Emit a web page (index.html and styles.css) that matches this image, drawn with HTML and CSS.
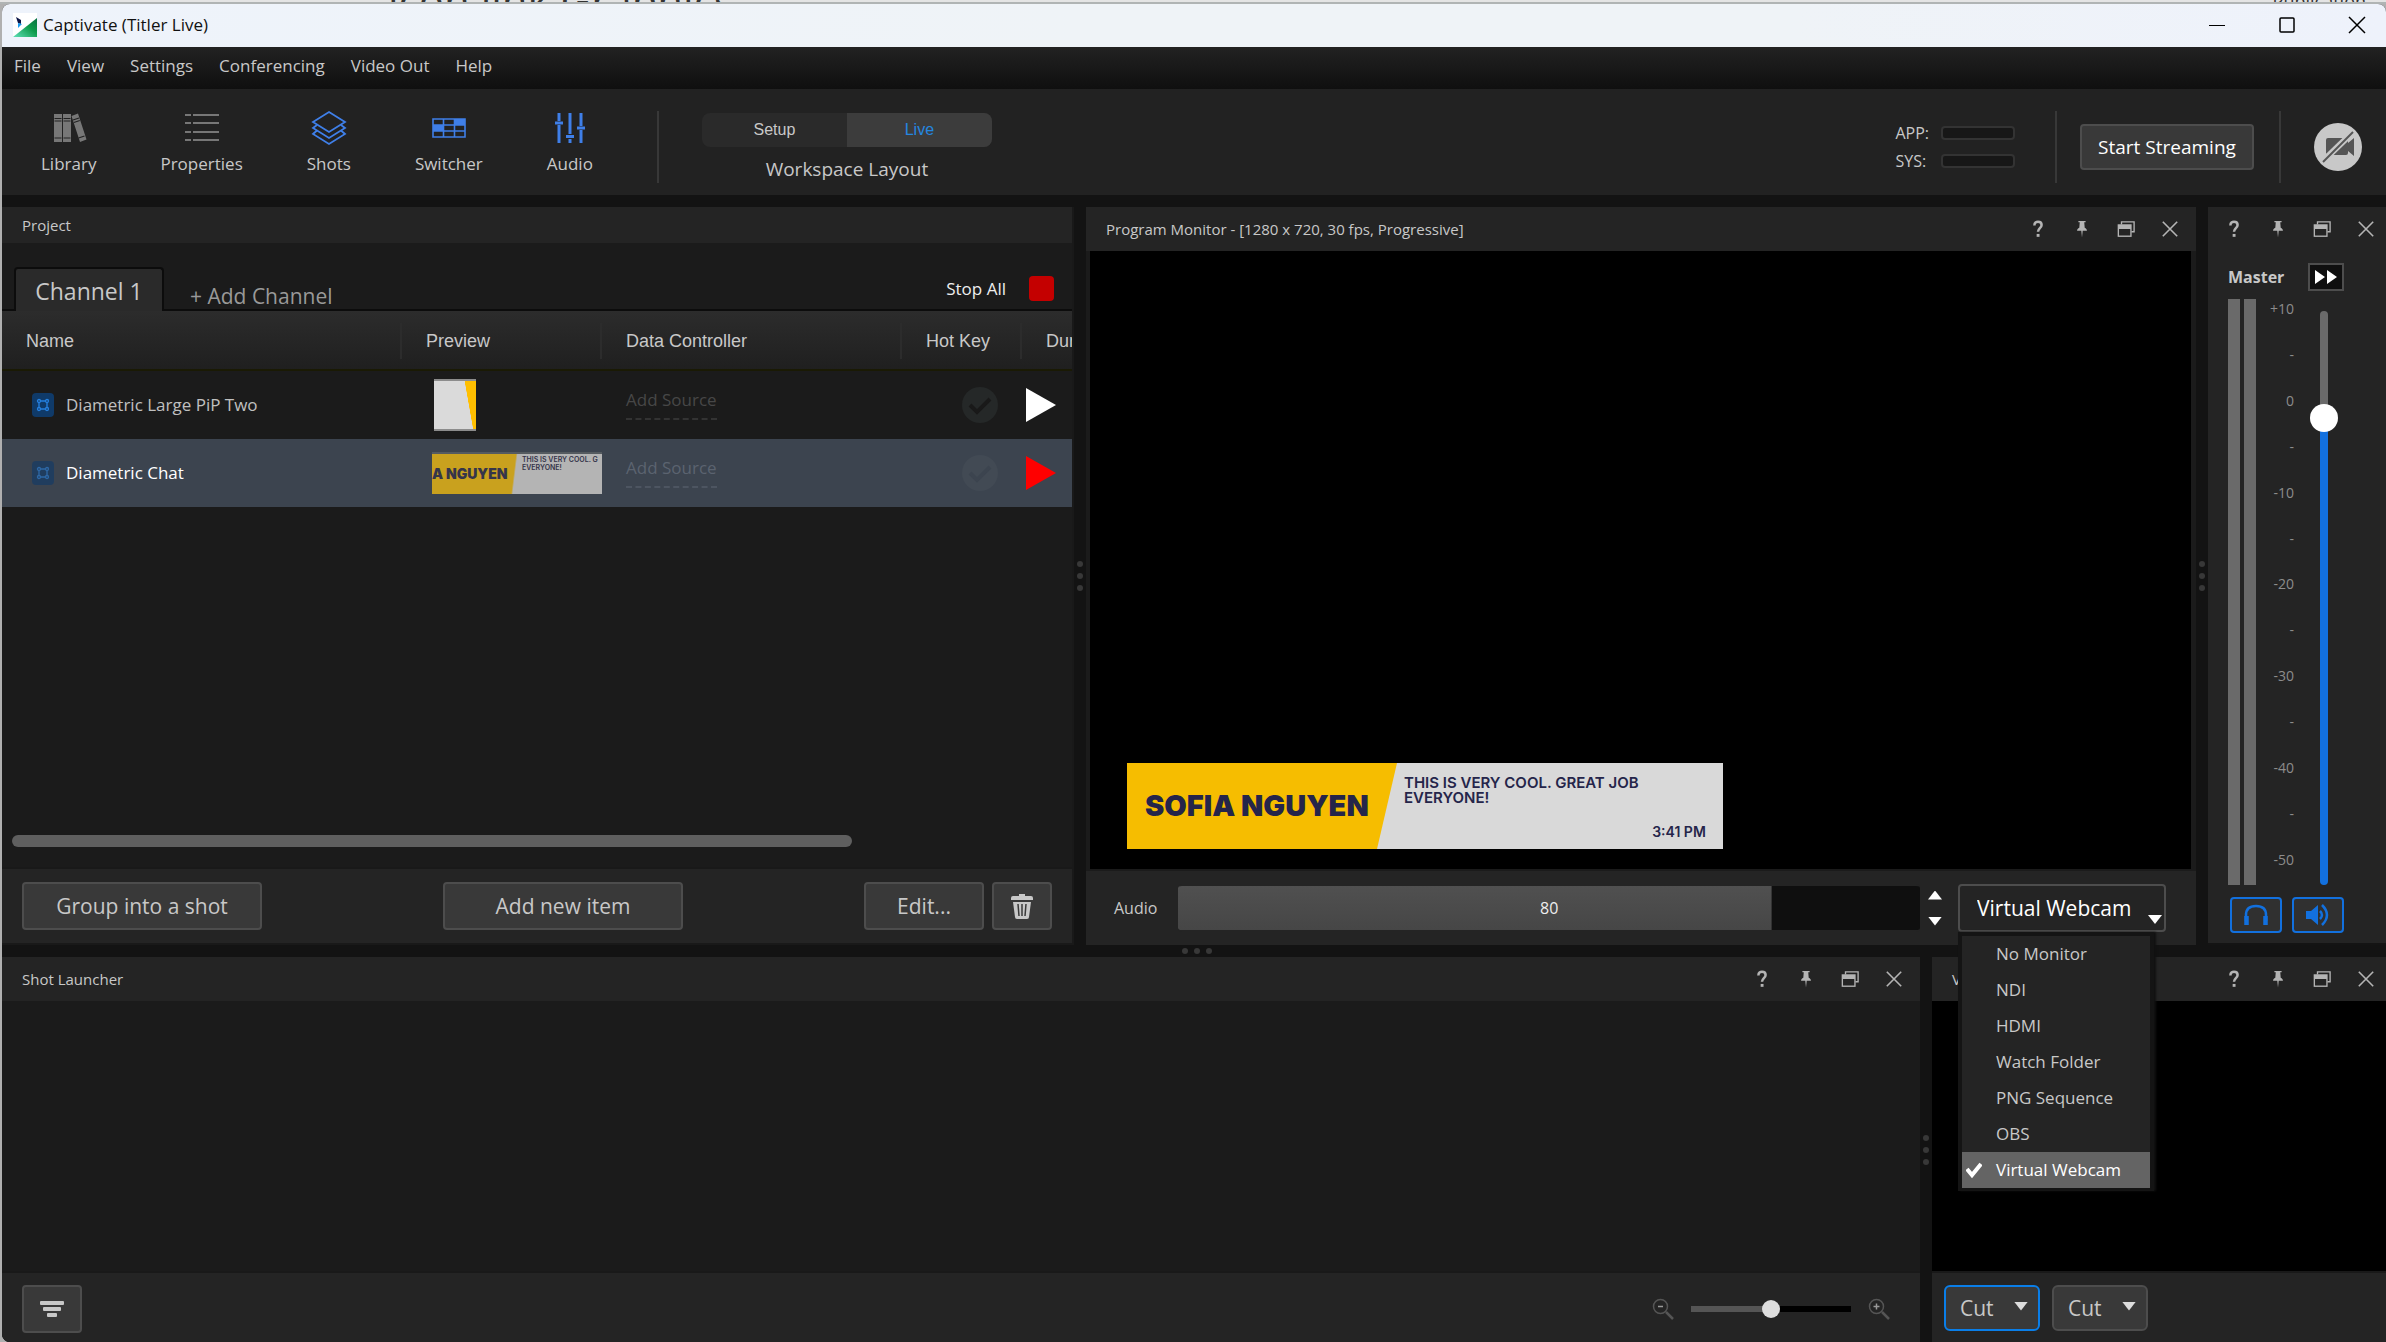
FILE: index.html
```html
<!DOCTYPE html>
<html lang="en">
<head>
  <meta charset="UTF-8">
  <meta name="viewport" content="width=device-width, initial-scale=1.0">
  <title>Captivate (Titler Live)</title>
  <link rel="stylesheet" href="styles.css">
</head>
<body>

<!-- Shared icons -->
<svg class="sprite" aria-hidden="true">
  <symbol id="i-help" viewBox="0 0 20 20"><path d="M6 6c0-3 2-4 4-4s4 1 4 3.500c0 3.500-4 3.500-4 7.500" fill="none" stroke="currentColor" stroke-width="2.800"/><rect x="8.500" y="15.500" width="3.200" height="3.200" fill="currentColor"/></symbol>
  <symbol id="i-pin" viewBox="0 0 20 20"><path d="M6 1h8v1.500h-1.500l.5 6c1.500.6 2.500 1.700 2.500 3.500h-4.700L10 19.500 9.200 12H4.500c0-1.800 1-2.900 2.500-3.500l.5-6H6z" fill="currentColor"/></symbol>
  <symbol id="i-restore" viewBox="0 0 20 20"><path d="M5 5V2h14v11h-3" fill="none" stroke="currentColor" stroke-width="1.500"/><rect x="1.500" y="5.500" width="14" height="12.500" fill="none" stroke="currentColor" stroke-width="1.500"/><rect x="1.500" y="5.500" width="14" height="4.500" fill="currentColor"/></symbol>
  <symbol id="i-close" viewBox="0 0 20 20"><path d="M2 2l16 16M18 2L2 18" fill="none" stroke="currentColor" stroke-width="1.800"/></symbol>
  <symbol id="i-item" viewBox="0 0 22 24"><rect width="22" height="24" rx="4" fill="#0f3a69"/><g fill="none" stroke="#2580e0" stroke-width="1.300"><path d="M8.500 8h5M8.500 16h5M7 9.500v5M15 9.500v5"/><circle cx="7" cy="8" r="1.500"/><circle cx="15" cy="8" r="1.500"/><circle cx="7" cy="16" r="1.500"/><circle cx="15" cy="16" r="1.500"/></g></symbol>
  <symbol id="i-check" viewBox="0 0 36 36"><circle cx="18" cy="18" r="18" fill="currentColor"/><path d="M8 18l7 7L28 12" fill="none" stroke="var(--tick)" stroke-width="4"/></symbol>
  <symbol id="i-play" viewBox="0 0 30 34"><path d="M0 0l30 17L0 34z" fill="currentColor"/></symbol>
</svg>

<div class="desktop"><span class="behind">icon link Graphics</span><span class="behind">Publication</span></div>

<div class="window">
  <header class="titlebar">
    <svg width="24" height="24" viewBox="0 0 24 24"><defs><linearGradient id="logo" x1="0" y1="1" x2="1" y2="0"><stop offset="0" stop-color="#5fe0b8"/><stop offset=".6" stop-color="#0c9a4a"/><stop offset="1" stop-color="#087042"/></linearGradient></defs><rect width="24" height="24" fill="#fff"/><path d="M24 5v19H0z" fill="url(#logo)"/><path d="M3 4l5 3v4l-3-1z" fill="#0b1445"/><path d="M5 10l4 1-4 4z" fill="#1b9cf0"/></svg>
    <h1>Captivate (Titler Live)</h1>
    <div class="window-buttons">
      <button aria-label="Minimize"><svg width="18" height="18" viewBox="0 0 18 18"><path d="M1 9.500h16" stroke="#000"/></svg></button>
      <button aria-label="Maximize"><svg width="18" height="18" viewBox="0 0 18 18"><rect x="2" y="2" width="14" height="14" rx="1" fill="none" stroke="#000" stroke-width="1.500"/></svg></button>
      <button aria-label="Close"><svg width="18" height="18" viewBox="0 0 18 18"><path d="M1 1l16 16M17 1L1 17" stroke="#000" stroke-width="1.500"/></svg></button>
    </div>
  </header>

  <nav class="menubar">
    <button>File</button>
    <button>View</button>
    <button>Settings</button>
    <button>Conferencing</button>
    <button>Video Out</button>
    <button>Help</button>
  </nav>

  <div class="toolbar">
    <div class="tools">
      <button class="tool">
        <svg width="36" height="36" viewBox="0 0 36 36" fill="#777"><path d="M3 4h8v28H3zM12 4h8v28h-8zM20.500 6l6.500-2.500 8.500 26-6.500 2.500z"/><path d="M3.500 8.500h7M3.500 11h7M3.500 28h7M12.500 8.500h7M12.500 11h7M12.500 28h7M22 10l6-2M22.800 12.500l6-2M27.500 28l6-2" stroke="#222" stroke-width="1.200"/></svg>
        Library
      </button>
      <button class="tool">
        <svg width="36" height="36" viewBox="0 0 36 36" fill="#777"><path d="M1 4h6v2H1zM9 4h26v2H9zM1 12h6v2H1zM9 12h26v2H9zM1 21h6v2H1zM9 21h26v2H9zM1 29h6v2H1zM9 29h26v2H9z"/></svg>
        Properties
      </button>
      <button class="tool">
        <svg width="36" height="36" viewBox="0 0 36 36" fill="none" stroke="#3f7fe8" stroke-width="1.800"><path d="M18 2l16 10-16 10L2 12z"/><path d="M6 15l-4 3 16 10 16-10-4-3M6 20.500l-4 3.500 16 10 16-10-4-3.500"/></svg>
        Shots
      </button>
      <button class="tool">
        <svg width="36" height="36" viewBox="0 0 36 36"><path d="M2 9h32v18H2zM2 15h32M2 21h32M12.500 9v18M23.500 9v18" fill="none" stroke="#3f7fe8" stroke-width="1.600"/><path d="M24 9h10v6H24zM2 15h10v6H2z" fill="#3f7fe8"/></svg>
        Switcher
      </button>
      <button class="tool">
        <svg width="36" height="36" viewBox="0 0 36 36" fill="#3f7fe8"><path d="M5.500 3h3v8h-3zM5.500 15h3v18h-3zM3 11.500h8v3H3zM16.500 3h3v21h-3zM16.500 29h3v4h-3zM14 25h8v3h-8zM27.500 3h3v13h-3zM27.500 20h3v13h-3zM25 16.500h8v3h-8z"/></svg>
        Audio
      </button>
    </div>
    <div class="divider"></div>
    <div class="workspace">
      <div class="segmented">
        <button>Setup</button>
        <button class="active">Live</button>
      </div>
      <span>Workspace Layout</span>
    </div>
    <div class="usage">
      <span>APP:</span><div class="usage-bar"></div>
      <span>SYS:</span><div class="usage-bar"></div>
    </div>
    <div class="divider"></div>
    <button class="btn stream">Start Streaming</button>
    <div class="divider"></div>
    <button class="camera" aria-label="Camera off">
      <svg width="48" height="48" viewBox="0 0 48 48"><circle cx="24" cy="24" r="24" fill="#c8c8c8"/><path d="M14 15h18q2 0 2 2v3l6-5v18l-6-5v2q0 2-2 2H14q-2 0-2-2V17q0-2 2-2z" fill="#555"/><path d="M8 39L39 9" stroke="#c8c8c8" stroke-width="6"/><path d="M9 39L39 9" stroke="#555" stroke-width="2"/></svg>
    </button>
  </div>

  <main class="workarea">
    <section class="panel project">
      <h2 class="panel-head small">Project</h2>
      <div class="tabs">
        <button class="tab">Channel 1</button>
        <button class="add-tab">+ Add Channel</button>
        <button class="stop-all">Stop All <i></i></button>
      </div>
      <div class="table-wrap">
        <table>
          <colgroup><col class="c-name"><col class="c-preview"><col class="c-data"><col class="c-key"><col class="c-dur"></colgroup>
          <thead>
            <tr><th><span>Name</span></th><th><span>Preview</span></th><th><span>Data Controller</span></th><th><span>Hot Key</span></th><th><span>Duration</span></th></tr>
          </thead>
          <tbody>
            <tr>
              <td class="name"><div class="item"><svg width="22" height="24"><use href="#i-item"/></svg>Diametric Large PiP Two</div></td>
              <td class="preview"><div class="thumb-pip"></div></td>
              <td><a href="#" class="source">Add Source</a></td>
              <td class="key"><svg width="36" height="36"><use href="#i-check"/></svg></td>
              <td class="play"><button aria-label="Play"><svg width="30" height="34"><use href="#i-play"/></svg></button></td>
            </tr>
            <tr class="selected">
              <td class="name"><div class="item"><svg width="22" height="24"><use href="#i-item"/></svg>Diametric Chat</div></td>
              <td class="preview"><div class="thumb-chat"><b>A NGUYEN</b><span>THIS IS VERY COOL. G<br>EVERYONE!</span></div></td>
              <td><a href="#" class="source">Add Source</a></td>
              <td class="key"><svg width="36" height="36"><use href="#i-check"/></svg></td>
              <td class="play"><button aria-label="Playing"><svg width="30" height="34"><use href="#i-play"/></svg></button></td>
            </tr>
          </tbody>
        </table>
      </div>
      <div class="scrollbar"><div></div></div>
      <div class="panel-foot">
        <button class="btn wide">Group into a shot</button>
        <button class="btn wide">Add new item</button>
        <div class="pair">
          <button class="btn edit">Edit...</button>
          <button class="btn trash" aria-label="Delete"><svg width="24" height="26" viewBox="0 0 24 26" fill="#c8c8c8"><path d="M9 3V1h6v2h6q2 0 2 2v2H1V5q0-2 2-2z"/><path d="M3 9h18l-2 15q0 2-2 2H7q-2 0-2-2z"/><path d="M8 11l1 12M12 11v12M16 11l-1 12" stroke="#393939" stroke-width="1.500"/></svg></button>
        </div>
      </div>
    </section>

    <div class="splitter v s1"><i></i><i></i><i></i></div>

    <section class="panel program">
      <div class="panel-head">
        <h2>Program Monitor - [1280 x 720, 30 fps, Progressive]</h2>
        <div class="panel-icons">
          <button aria-label="Help"><svg><use href="#i-help"/></svg></button>
          <button aria-label="Pin"><svg><use href="#i-pin"/></svg></button>
          <button aria-label="Float"><svg><use href="#i-restore"/></svg></button>
          <button aria-label="Close"><svg><use href="#i-close"/></svg></button>
        </div>
      </div>
      <div class="video">
        <div class="lower-third">
          <div class="speaker">SOFIA NGUYEN</div>
          <div class="message">
            <p>THIS IS VERY COOL. GREAT JOB EVERYONE!</p>
            <time>3:41 PM</time>
          </div>
        </div>
      </div>
      <div class="panel-foot audio-foot">
        <label for="audio">Audio</label>
        <div class="level">
          <input type="range" id="audio" min="0" max="100" value="80">
          <output for="audio">80</output>
        </div>
        <div class="spin">
          <button class="up" aria-label="Increase"></button>
          <button class="down" aria-label="Decrease"></button>
        </div>
        <div class="output-picker">
          <div class="drop">
            <select aria-label="Output"><option>Virtual Webcam</option></select>
          </div>
          <ul class="output-menu">
            <li>No Monitor</li>
            <li>NDI</li>
            <li>HDMI</li>
            <li>Watch Folder</li>
            <li>PNG Sequence</li>
            <li>OBS</li>
            <li class="checked"><svg width="16" height="18" viewBox="0 0 16 18"><path d="M1 8l5 6L15 3" fill="none" stroke="#fff" stroke-width="4"/></svg>Virtual Webcam</li>
          </ul>
        </div>
      </div>
    </section>

    <div class="splitter v s2"><i></i><i></i><i></i></div>

    <section class="panel mixer">
      <div class="panel-head">
        <div class="panel-icons">
          <button aria-label="Help"><svg><use href="#i-help"/></svg></button>
          <button aria-label="Pin"><svg><use href="#i-pin"/></svg></button>
          <button aria-label="Float"><svg><use href="#i-restore"/></svg></button>
          <button aria-label="Close"><svg><use href="#i-close"/></svg></button>
        </div>
      </div>
      <div class="mixer-title">
        <label for="master">Master</label>
        <button aria-label="Expand"><svg width="24" height="14" viewBox="0 0 24 14" fill="#fff"><path d="M1 0l10 7-10 7zM13 0l10 7-10 7z"/></svg></button>
      </div>
      <div class="faders">
        <div class="meter"></div>
        <div class="meter"></div>
        <div class="scale">
          <span>+10</span><span>-</span><span>0</span><span>-</span><span>-10</span><span>-</span><span>-20</span><span>-</span><span>-30</span><span>-</span><span>-40</span><span>-</span><span>-50</span>
        </div>
        <input type="range" id="master" min="0" max="100" value="83">
      </div>
      <div class="mixer-buttons">
        <button aria-label="Headphones"><svg width="28" height="24" viewBox="0 0 28 24" fill="none" stroke="#1270de"><path d="M4 18V12q0-9 10-9t10 9v6" stroke-width="2.500"/><path d="M4.500 13v9M23.500 13v9" stroke-width="4.500"/></svg></button>
        <button aria-label="Speaker"><svg width="28" height="24" viewBox="0 0 28 24"><path d="M2 8h5l7-6v20l-7-6H2z" fill="#1270de"/><path d="M16 8q4 4 0 8M18 2q10 10 0 20" fill="none" stroke="#1270de" stroke-width="2.500"/></svg></button>
      </div>
    </section>

    <div class="splitter h"><i></i><i></i><i></i></div>

    <div class="bottom">
      <section class="panel launcher">
        <div class="panel-head">
          <h2>Shot Launcher</h2>
          <div class="panel-icons">
            <button aria-label="Help"><svg><use href="#i-help"/></svg></button>
            <button aria-label="Pin"><svg><use href="#i-pin"/></svg></button>
            <button aria-label="Float"><svg><use href="#i-restore"/></svg></button>
            <button aria-label="Close"><svg><use href="#i-close"/></svg></button>
          </div>
        </div>
        <div class="shots"></div>
        <div class="panel-foot">
          <button class="btn filter" aria-label="Filter"><svg width="24" height="20" viewBox="0 0 24 20" fill="#c8c8c8"><rect y="2" width="24" height="4" rx="1"/><rect x="3" y="8" width="18" height="4" rx="1"/><rect x="7" y="14" width="10" height="4" rx="1"/></svg></button>
          <div class="zoom">
            <svg width="22" height="22" viewBox="0 0 22 22" fill="none" stroke="#555" stroke-width="1.500"><circle cx="8.500" cy="8.500" r="7"/><path d="M14 14l7 7" stroke-width="2.500"/><path d="M6 8.500h5" stroke="#999"/></svg>
            <input type="range" aria-label="Zoom" min="0" max="100" value="50">
            <svg width="22" height="22" viewBox="0 0 22 22" fill="none" stroke="#555" stroke-width="1.500"><circle cx="8.500" cy="8.500" r="7"/><path d="M14 14l7 7" stroke-width="2.500"/><path d="M5.500 8.500h6M8.500 5.500v6" stroke="#999"/></svg>
          </div>
        </div>
      </section>

      <div class="splitter v"><i></i><i></i><i></i></div>

      <section class="panel switcher">
        <div class="panel-head">
          <h2>V</h2>
          <div class="panel-icons">
            <button aria-label="Help"><svg><use href="#i-help"/></svg></button>
            <button aria-label="Pin"><svg><use href="#i-pin"/></svg></button>
            <button aria-label="Float"><svg><use href="#i-restore"/></svg></button>
            <button aria-label="Close"><svg><use href="#i-close"/></svg></button>
          </div>
        </div>
        <div class="black"></div>
        <div class="panel-foot">
          <div class="drop cut active"><select aria-label="Transition"><option>Cut</option></select></div>
          <div class="drop cut"><select aria-label="Overlay transition"><option>Cut</option></select></div>
        </div>
      </section>
    </div>
  </main>
</div>

</body>
</html>
```
FILE: styles.css
```css
* {
  box-sizing: border-box;
}
body {
  margin: 0;
  height: 100vh;
  display: flex;
  flex-direction: column;
  overflow: hidden;
  background: #b0b0b0;
  color: #c8c8c8;
  font-family: "Open Sans", "Noto Sans", sans-serif;
  font-size: 17px;
  line-height: 24px;
}
button, select, input {
  margin: 0;
  padding: 0;
  border: 0;
  background: none;
  color: inherit;
  font: inherit;
}
h1, h2, p, ul {
  margin: 0;
  padding: 0;
}
h1, h2 {
  font-weight: normal;
}
svg {
  display: block;
  flex: none;
}
.sprite {
  position: absolute;
  width: 0;
  height: 0;
}

/* Page behind the window */
.desktop {
  height: 4px;
  padding: 0 20px 0 388px;
  display: flex;
  align-items: center;
  justify-content: space-between;
  overflow: hidden;
  background: #e4e4e4;
  border-bottom: 2px solid #b0b4b4;
  color: #333;
  font-size: 42px;
}
.desktop .behind + .behind {
  font-size: 18px;
}

.window {
  flex: 1;
  min-height: 0;
  margin-left: 2px;
  display: flex;
  flex-direction: column;
  border-radius: 8px 8px 0 8px;
  overflow: hidden;
  background: #131313;
}

/* Title bar and menu */
.titlebar {
  height: 43px;
  padding: 0 20px 2px 11px;
  display: flex;
  align-items: center;
  gap: 6px;
  background: linear-gradient(90deg, #eef3fb 0, #eff3f7 45%, #eff3f7 75%, #eef2fb);
  color: #111;
}
.titlebar h1 {
  font-size: 17px;
}
.window-buttons {
  margin-left: auto;
  display: flex;
  gap: 52px;
}
.menubar {
  height: 42px;
  padding: 0 12px 4px;
  display: flex;
  align-items: center;
  gap: 26px;
  background: linear-gradient(#222, #0f0f0f);
}

/* Toolbar */
.toolbar {
  height: 106px;
  padding: 10px 24px 0 39px;
  display: flex;
  align-items: center;
  background: #222;
}
.tools {
  display: flex;
  gap: 64px;
  margin: 0 64px 8px 0;
}
.tool {
  display: flex;
  flex-direction: column;
  align-items: center;
  gap: 6px;
}
.divider {
  width: 2px;
  height: 72px;
  background: #383838;
}
.workspace {
  margin-left: 43px;
  width: 290px;
  display: flex;
  flex-direction: column;
  align-items: center;
  gap: 10px;
  font-size: 19px;
}
.segmented {
  width: 100%;
  display: grid;
  grid-template-columns: 1fr 1fr;
  border-radius: 8px;
  overflow: hidden;
  background: #2a2a2a;
  font: 16px/34px "Liberation Sans", Arial, sans-serif;
}
.segmented .active {
  background: #3c3c3c;
  color: #2487e0;
}
.usage {
  margin: 0 40px 0 auto;
  display: grid;
  grid-template-columns: auto 74px;
  gap: 4px 12px;
  align-items: center;
  font-size: 16px;
}
.usage-bar {
  height: 14px;
  background: #171717;
  border: 2px solid #333;
  border-radius: 4px;
}
.btn {
  height: 48px;
  background: #393939;
  border: 2px solid #4d4d4d;
  border-radius: 4px;
  font-size: 21px;
  display: flex;
  align-items: center;
  justify-content: center;
}
.stream {
  width: 174px;
  height: 46px;
  margin: 0 25px 0 23px;
  color: #fff;
  font-size: 19px;
}
.camera {
  margin-left: 33px;
}

/* Docked panels */
.workarea {
  flex: 1;
  min-height: 0;
  margin-top: 12px;
  display: grid;
  grid-template-columns: 1072fr 12px 1110fr 12px 178px;
  grid-template-rows: 738fr 12px 385fr;
}
.panel {
  min-width: 0;
  min-height: 0;
  display: flex;
  flex-direction: column;
  background: #1b1b1b;
}
.panel-head {
  height: 44px;
  padding: 0 4px 0 20px;
  display: flex;
  flex: none;
  align-items: center;
  background: #242424;
  font-size: 15px;
}
.panel-head h2 {
  font-size: 15px;
}
.panel-head.small {
  height: 36px;
}
.panel-icons {
  margin-left: auto;
  display: flex;
  color: #b4b4b4;
}
.panel-icons button {
  width: 44px;
  height: 44px;
  display: grid;
  place-items: center;
}
.panel-icons svg {
  width: 20px;
  height: 18px;
}
.panel-foot {
  height: 74px;
  padding: 0 20px;
  display: flex;
  flex: none;
  align-items: center;
  justify-content: space-between;
  background: #242424;
}
.splitter {
  display: flex;
  align-items: center;
  justify-content: center;
  gap: 6px;
}
.splitter.v {
  flex-direction: column;
  flex: 0 0 12px;
}
.splitter.h {
  grid-column: 1 / -1;
  padding-left: 6px;
}
.splitter i {
  width: 6px;
  height: 6px;
  border-radius: 50%;
  background: #383838;
}

/* Project */
.project {
  border: solid #191919;
  border-width: 0 2px 2px 0;
}
.tabs {
  height: 68px;
  flex: none;
  padding: 0 18px 0 12px;
  display: flex;
  align-items: flex-end;
  box-shadow: inset 0 -2px #0c0c0c;
}
.tab {
  width: 150px;
  height: 44px;
  padding-top: 2px;
  background: #2a2a2a;
  border: 2px solid #0c0c0c;
  border-bottom: 0;
  border-radius: 4px 4px 0 0;
  font-size: 23px;
}
.add-tab {
  margin-left: 26px;
  height: 30px;
  color: #999;
  font-size: 21px;
}
.stop-all {
  margin: 0 0 10px auto;
  display: flex;
  align-items: center;
  gap: 23px;
  color: #eee;
}
.stop-all i {
  width: 25px;
  height: 25px;
  border-radius: 4px;
  background: #c40000;
}
.table-wrap {
  flex: 1;
  min-height: 0;
  overflow: hidden;
}
table {
  width: 1300px;
  table-layout: fixed;
  border-collapse: collapse;
}
.c-name { width: 400px; }
.c-preview { width: 200px; }
.c-data { width: 300px; }
.c-key { width: 120px; }
thead tr {
  height: 60px;
  background: linear-gradient(#2c2c2c, #1f1f1f);
  box-shadow: inset 0 -2px #1a1a04;
}
th {
  padding: 0;
  text-align: left;
  font: 18px/36px "Liberation Sans", Arial, sans-serif;
}
th span {
  display: block;
  padding-left: 24px;
  border-right: 2px solid #2c2c2c;
}
td {
  height: 68px;
  padding: 0 0 0 24px;
}
.name {
  padding-left: 30px;
}
.item {
  display: flex;
  align-items: center;
  gap: 12px;
}
.preview {
  padding-left: 30px;
}
tbody tr {
  color: #c0c0c0;
}
.selected {
  background: #3c444f;
}
.selected .item {
  color: #fff;
}
.selected .item svg {
  opacity: .6;
}
.thumb-pip {
  width: 42px;
  height: 52px;
  margin-left: 2px;
  border: solid #8c8c8c;
  border-width: 2px 0;
  background: linear-gradient(80deg, #dadada 77%, #ffbf00 78%);
}
.thumb-chat {
  width: 170px;
  height: 42px;
  padding-top: 2px;
  display: flex;
  overflow: hidden;
  border-top: 2px solid #555b60;
  background: linear-gradient(97deg, #c9a11e 48%, #b4b4b4 49%);
  color: #35354a;
  font-family: Inter, sans-serif;
}
.thumb-chat b {
  flex: 0 0 90px;
  font-size: 14px;
  font-weight: 900;
  line-height: 36px;
}
.thumb-chat span {
  font-size: 7px;
  font-weight: 600;
  line-height: 8px;
  white-space: nowrap;
}
.source {
  display: inline-block;
  margin-bottom: 2px;
  padding-bottom: 6px;
  border-bottom: 2px dashed #333;
  color: #474747;
  text-decoration: none;
}
.selected .source {
  color: #5b636f;
  border-color: #4d5561;
}
.key {
  padding-left: 60px;
  color: #252828;
  --tick: #191919;
}
.selected .key {
  color: #424a54;
  --tick: #3c444f;
}
.play {
  padding-left: 4px;
  color: #fff;
}
.play button {
  display: block;
}
.selected .play {
  color: #f00;
}
.scrollbar {
  flex: none;
  padding: 0 10px 20px;
  border-bottom: 2px solid #191919;
}
.scrollbar div {
  width: 80%;
  height: 12px;
  border-radius: 6px;
  background: #5f5f5f;
}
.wide {
  width: 240px;
}
.pair {
  display: flex;
  gap: 8px;
}
.edit {
  width: 120px;
}
.trash, .filter {
  width: 60px;
}

/* Program monitor */
.video {
  flex: 1;
  margin: 0 5px 2px 4px;
  padding: 0 0 20px 37px;
  display: flex;
  align-items: flex-end;
  background: #000;
}
.lower-third {
  width: 56%;
  max-width: 597px;
  height: 86px;
  display: flex;
  background: #d9d9d9;
  color: #25254a;
  font-family: Inter, sans-serif;
  font-weight: 600;
}
.speaker {
  flex: 0 0 270px;
  padding-left: 18px;
  background: #f6bd00;
  clip-path: polygon(0 0, 100% 0, 250px 100%, 0 100%);
  font-size: 29px;
  font-weight: 900;
  line-height: 86px;
  white-space: nowrap;
}
.message {
  flex: 1;
  padding: 12px 17px 8px 7px;
  display: flex;
  flex-direction: column;
  justify-content: space-between;
  font-size: 15px;
  line-height: 15px;
}
.message p {
  max-width: 260px;
}
.message time {
  align-self: flex-end;
  font-size: 14px;
  line-height: 18px;
}
.audio-foot {
  padding: 0 30px 0 28px;
  font-size: 16px;
}
.level {
  flex: 1;
  margin: 0 8px 0 21px;
  position: relative;
}
.level input {
  display: block;
  width: 100%;
  height: 48px;
  appearance: none;
  border: solid #242424;
  border-width: 2px 0;
  border-radius: 4px;
  background: linear-gradient(#505050, #464646) 0 0 / 80% 100% no-repeat #0f0f0f;
}
.level input::-webkit-slider-thumb {
  appearance: none;
  width: 1px;
  height: 44px;
}
.level output {
  position: absolute;
  inset: 0;
  text-align: center;
  line-height: 48px;
  color: #eee;
  pointer-events: none;
}
.spin {
  margin-right: 16px;
  display: grid;
  gap: 17px;
}
.spin button, .drop::after {
  width: 14px;
  height: 9px;
  background: #fff;
  clip-path: polygon(0 0, 100% 0, 50% 100%);
}
.spin .up {
  clip-path: polygon(50% 0, 100% 100%, 0 100%);
}
.output-picker {
  position: relative;
}
.drop {
  position: relative;
}
.drop::after {
  content: "";
  position: absolute;
  right: 4px;
  bottom: 8px;
  pointer-events: none;
}
.drop select {
  appearance: none;
  display: block;
  width: 208px;
  height: 48px;
  padding-left: 17px;
  border: 2px solid #4d4d4d;
  border-radius: 4px;
  background: #242424;
  color: #fff;
  font-size: 21px;
}
.output-menu {
  position: absolute;
  top: 48px;
  left: 0;
  z-index: 2;
  width: 196px;
  border: solid #141414;
  border-width: 4px 4px 3px;
  background: #242424;
  box-shadow: 2px 0 2px #111;
  list-style: none;
  font-size: 17px;
  line-height: 36px;
}
.output-menu li {
  position: relative;
  padding-left: 34px;
}
.output-menu .checked {
  background: #646464;
  color: #fff;
}
.output-menu svg {
  position: absolute;
  left: 4px;
  top: 9px;
}

/* Mixer */
.mixer {
  background: #242424;
  border-bottom: 2px solid #141414;
}
.mixer .panel-head {
  padding: 0 0 0 4px;
}
.mixer .panel-icons, .switcher .panel-icons {
  margin-right: -2px;
}
.mixer-title {
  padding: 12px 42px 8px 20px;
  display: flex;
  justify-content: space-between;
  align-items: center;
  font-size: 16px;
  font-weight: bold;
}
.mixer-title button {
  width: 36px;
  height: 28px;
  display: grid;
  place-items: center;
  background: #0f0f0f;
  border: 2px solid #4d4d4d;
}
.faders {
  flex: 1;
  min-height: 0;
  padding-left: 20px;
  display: flex;
  gap: 4px;
}
.meter {
  width: 12px;
  background: #6a6a6a;
}
.scale {
  width: 34px;
  padding-bottom: 15px;
  display: flex;
  flex-direction: column;
  justify-content: space-between;
  text-align: right;
  color: #8c8c8c;
  font-size: 14px;
  line-height: 20px;
}
#master {
  appearance: none;
  writing-mode: vertical-lr;
  direction: rtl;
  width: 28px;
  height: calc(100% - 12px);
  margin: 12px 0 0 12px;
}
#master::-webkit-slider-runnable-track {
  width: 8px;
  border-radius: 4px;
  background: linear-gradient(#6a6a6a 18%, #1270de 18%);
}
#master::-webkit-slider-thumb {
  appearance: none;
  width: 28px;
  height: 28px;
  margin-left: -10px;
  border-radius: 50%;
  background: #fff;
}
.mixer-buttons {
  padding: 12px 0 10px 22px;
  display: flex;
  gap: 10px;
}
.mixer-buttons button {
  width: 52px;
  height: 36px;
  display: grid;
  place-items: center;
  border: 2px solid #1270de;
  border-radius: 4px;
  background: #303030;
}

/* Bottom row */
.bottom {
  grid-column: 1 / -1;
  display: flex;
  min-height: 0;
}
.launcher {
  flex: 1;
}
.shots, .black {
  flex: 1;
}
.black {
  background: #000;
}
.launcher .panel-foot, .switcher .panel-foot {
  height: 71px;
  padding-top: 2px;
  border-top: 2px solid #191919;
}
.zoom {
  display: flex;
  align-items: center;
  gap: 17px;
  margin-right: 10px;
}
.zoom input {
  appearance: none;
  width: 160px;
  height: 20px;
}
.zoom input::-webkit-slider-runnable-track {
  height: 6px;
  background: linear-gradient(90deg, #555 50%, #000 50%);
}
.zoom input::-webkit-slider-thumb {
  appearance: none;
  width: 18px;
  height: 18px;
  margin-top: -6px;
  border-radius: 50%;
  background: #ddd;
}
.switcher {
  flex: 0 0 454px;
}
.switcher .panel-head {
  padding-right: 0;
}
.switcher .panel-foot {
  padding: 0 12px;
  justify-content: flex-start;
  gap: 12px;
}
.cut select {
  width: 96px;
  height: 46px;
  padding-left: 14px;
  background: #393939;
  border-radius: 6px;
  color: #c8c8c8;
}
.cut.active select {
  border-color: #0a7ee8;
}
.cut::after {
  right: 12px;
  bottom: 20px;
  background: #ddd;
}
```
